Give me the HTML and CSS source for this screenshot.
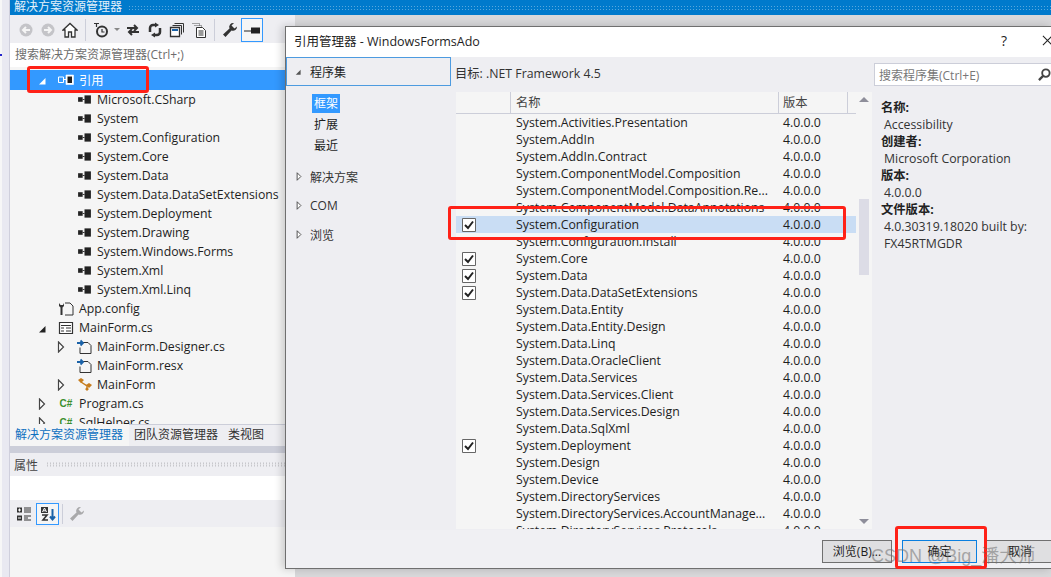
FILE: index.html
```html
<!DOCTYPE html>
<html lang="zh-CN">
<head>
    <meta charset="UTF-8">
    <title>引用管理器</title>
    <link rel="stylesheet" href="styles.css">
</head>
<body>
    <svg class="defs" width="0" height="0">
        <symbol id="ref" viewBox="0 0 16 12">
            <path d="M1 3.500h5v5H1z" fill="currentColor"/>
            <path d="M6 6h2" fill="none" stroke="currentColor"/>
            <path d="M8 1.500h7v9H8z" fill="currentColor"/>
        </symbol>
        <symbol id="ref-sel" viewBox="0 0 16 12">
            <path d="M.5 3h5v5.500h-5zM5.500 5.500h3" fill="none" stroke="currentColor"/>
            <path d="M8 1h7.500v9.500H8z" fill="currentColor" stroke="currentColor" stroke-width=".6"/>
            <path d="M9.500 2.500h4.500v6.500H9.500z" fill="#222"/>
        </symbol>
        <symbol id="tri-open" viewBox="0 0 8 8"><path d="M7.500 1v6.500H1z" fill="currentColor"/></symbol>
        <symbol id="tri-closed" viewBox="0 0 8 12"><path d="M1.500 1l5 5-5 5z" fill="#fff" stroke="#444" stroke-width="1.200"/></symbol>
        <symbol id="file-link" viewBox="0 0 16 16">
            <path d="M6 3.500h5l3 3v8H3v-6" fill="none" stroke="#333"/>
            <path d="M0 4h5M3.500 1.500L6 4 3.500 6.500" fill="none" stroke="#1a62a8" stroke-width="1.800"/>
        </symbol>
        <symbol id="check" viewBox="0 0 14 14">
            <path d="M.5.500h13v13H.5z" fill="#fff" stroke="#666"/>
            <path d="M3 7l3 3 5-6.500" fill="none" stroke="#222" stroke-width="2"/>
        </symbol>
    </svg>

    <div class="edge"><span class="edge-dot"></span></div>

    <!-- 解决方案资源管理器 -->
    <div class="explorer">
        <div class="titlebar"><span>解决方案资源管理器</span><span class="grip"></span></div>
        <div class="toolbar">
            <svg class="tool" viewBox="0 0 16 16"><circle cx="8" cy="8" r="6.500" fill="#c4c4c8"/><path d="M12 8H5M8 5L5 8l3 3" fill="none" stroke="#f5f5f5" stroke-width="2"/></svg>
            <svg class="tool" viewBox="0 0 16 16"><circle cx="8" cy="8" r="6.500" fill="#c4c4c8"/><path d="M4 8h7M8 5l3 3-3 3" fill="none" stroke="#f5f5f5" stroke-width="2"/></svg>
            <svg class="tool" viewBox="0 0 16 16"><path d="M1 8l7-6.500L15 8h-2v7H9.500v-5h-3v5H3V8z" fill="#fff" stroke="#333" stroke-width="1.300"/></svg>
            <span class="sep"></span>
            <svg class="tool" viewBox="0 0 16 16"><circle cx="9" cy="9.500" r="5" fill="none" stroke="#333" stroke-width="2"/><path d="M9 7v3h2.500M1 1.500h5M3.500 1.500V5" fill="none" stroke="#333" stroke-width="1.200"/></svg>
            <span class="caret"></span>
            <svg class="tool" viewBox="0 0 16 16"><path d="M2 6h10M9 3l3 3-3 3" fill="none" stroke="#333" stroke-width="2"/><path d="M14 10H4M7 7l-3 3 3 3" fill="none" stroke="#333" stroke-width="2"/></svg>
            <svg class="tool" viewBox="0 0 16 16"><path d="M3 10V6a3 3 0 013-3h3M13 6v4a3 3 0 01-3 3H7" fill="none" stroke="#333" stroke-width="2.500"/><path d="M8 .500l4 2.500-4 2.500zM8 10.500L4 13l4 2.500z" fill="#333"/></svg>
            <svg class="tool" viewBox="0 0 16 16"><path d="M5.500 1.500h9v9M3.500 3.500h9v9" fill="none" stroke="#333"/><path d="M1.500 5.500h9v9h-9z" fill="#fff" stroke="#333" stroke-width="1.300"/><path d="M3 8h6" stroke="#1a62a8" stroke-width="2"/></svg>
            <svg class="tool" viewBox="0 0 16 16"><path d="M1.500 1.500h7v2M3.500 3.500h7v2" fill="none" stroke="#555" stroke-dasharray="1 1"/><path d="M5.500 5.500h6l3 3v7h-9z" fill="#fff" stroke="#333"/><path d="M7.500 9h5M7.500 11h5M7.500 13h5" stroke="#333"/></svg>
            <span class="sep"></span>
            <svg class="tool" viewBox="0 0 16 16"><path d="M15 4.500a4 4 0 01-5.500 4L3.500 15 1 12.500l6.500-6A4 4 0 0112 1L9.500 3.500l3 3z" fill="#333"/></svg>
            <span class="pin"><svg viewBox="0 0 16 8" width="16" height="8"><path d="M0 5h7" stroke="#222"/><path d="M7 1.500h9v6H7z" fill="#222"/></svg></span>
        </div>
        <div class="search">搜索解决方案资源管理器(Ctrl+;)</div>
        <div class="tree">
            <div class="node sel"><svg class="arrow open"><use href="#tri-open"/></svg><svg class="ticon ref-big"><use href="#ref-sel"/></svg>引用</div>
            <div class="node deep"><svg class="ticon ref"><use href="#ref"/></svg>Microsoft.CSharp</div>
            <div class="node deep"><svg class="ticon ref"><use href="#ref"/></svg>System</div>
            <div class="node deep"><svg class="ticon ref"><use href="#ref"/></svg>System.Configuration</div>
            <div class="node deep"><svg class="ticon ref"><use href="#ref"/></svg>System.Core</div>
            <div class="node deep"><svg class="ticon ref"><use href="#ref"/></svg>System.Data</div>
            <div class="node deep"><svg class="ticon ref"><use href="#ref"/></svg>System.Data.DataSetExtensions</div>
            <div class="node deep"><svg class="ticon ref"><use href="#ref"/></svg>System.Deployment</div>
            <div class="node deep"><svg class="ticon ref"><use href="#ref"/></svg>System.Drawing</div>
            <div class="node deep"><svg class="ticon ref"><use href="#ref"/></svg>System.Windows.Forms</div>
            <div class="node deep"><svg class="ticon ref"><use href="#ref"/></svg>System.Xml</div>
            <div class="node deep"><svg class="ticon ref"><use href="#ref"/></svg>System.Xml.Linq</div>
            <div class="node"><svg class="ticon" viewBox="0 0 16 16"><path d="M7 2h5l3 3v9H7" fill="none" stroke="#333"/><path d="M1 2v3l1.500 1.500V14h2V6.500L6 5V2L5 4H2.500z" fill="#333"/></svg>App.config</div>
            <div class="node"><svg class="arrow open dark"><use href="#tri-open"/></svg><svg class="ticon" viewBox="0 0 16 16"><path d="M1.500 2.500h13v11h-13z" fill="#fff" stroke="#333" stroke-width="1.200"/><path d="M3 5.500h10M3 8h3M8 8h5M3 11h3M8 11h5" stroke="#333"/></svg>MainForm.cs</div>
            <div class="node deep"><svg class="arrow"><use href="#tri-closed"/></svg><svg class="ticon"><use href="#file-link"/></svg>MainForm.Designer.cs</div>
            <div class="node deep"><svg class="ticon"><use href="#file-link"/></svg>MainForm.resx</div>
            <div class="node deep"><svg class="arrow"><use href="#tri-closed"/></svg><svg class="ticon" viewBox="0 0 16 16"><path d="M1 3l3-2 3 2-3 3zM9 8l3-2 3 2-3 3zM8 12l2-1.500 2 1.500-2 2z" fill="#c77d1e"/><path d="M4 5l6 4v3" fill="none" stroke="#c77d1e" stroke-width="1.500"/></svg>MainForm</div>
            <div class="node"><svg class="arrow"><use href="#tri-closed"/></svg><span class="csharp">C#</span>Program.cs</div>
            <div class="node"><svg class="arrow"><use href="#tri-closed"/></svg><span class="csharp">C#</span>SqlHelper.cs</div>
        </div>
        <div class="tabs">
            <span class="tab active">解决方案资源管理器</span>
            <span class="tab">团队资源管理器</span>
            <span class="tab">类视图</span>
        </div>
        <div class="band"></div>
        <div class="props-head"><span>属性</span><span class="grip grey"></span></div>
        <div class="props-combo"></div>
        <div class="props-tools">
            <svg class="ptool" viewBox="0 0 16 16"><path d="M1 1.500h5v5H1zM1 9.500h5v5H1z" fill="#333"/><path d="M2 4h3M3.500 2.500v3M2 12h3" stroke="#fff"/><path d="M8 2h7M8 4h7M8 6h7M8 10h7M8 12h4M8 14h7" stroke="#333"/></svg>
            <span class="ptool-on"><svg class="ptool" viewBox="0 0 16 16"><path d="M1 1h7v6H1z" fill="#333"/><path d="M2.500 6l2-4 2 4M3.200 4.800h2.600" fill="none" stroke="#fff"/><path d="M2 9h5L3 14h5" fill="none" stroke="#333" stroke-width="1.600"/><path d="M12.500 3v10M10 10.500l2.500 3 2.500-3" fill="none" stroke="#1a62a8" stroke-width="2"/></svg></span>
            <span class="sep short"></span>
            <svg class="ptool wrench" viewBox="0 0 16 16"><path d="M15 4.500a4 4 0 01-5.500 4L3.500 15 1 12.500l6.500-6A4 4 0 0112 1L9.500 3.500l3 3z" fill="#a9a9ab"/></svg>
        </div>
        <div class="props-rest"></div>
    </div>

    <!-- 引用管理器 对话框 -->
    <div class="dialog">
        <div class="dlg-title">
            <span>引用管理器 - WindowsFormsAdo</span>
            <span class="help">?</span>
            <svg class="close" viewBox="0 0 12 12"><path d="M1 1l10 10M11 1L1 11" stroke="#222" stroke-width="1.100"/></svg>
        </div>
        <div class="dlg-body">
            <div class="nav">
                <div class="nav-head"><svg class="nav-arrow"><use href="#tri-open"/></svg>程序集</div>
                <div class="nav-sub">
                    <span class="sub on">框架</span>
                    <span class="sub">扩展</span>
                    <span class="sub">最近</span>
                </div>
                <div class="nav-item"><svg class="nav-tri"><use href="#tri-closed"/></svg>解决方案</div>
                <div class="nav-item"><svg class="nav-tri"><use href="#tri-closed"/></svg>COM</div>
                <div class="nav-item"><svg class="nav-tri"><use href="#tri-closed"/></svg>浏览</div>
            </div>
            <div class="center">
                <div class="target">目标: .NET Framework 4.5</div>
                <div class="list">
                    <div class="list-main">
                        <div class="list-head"><span class="col-check"></span><span class="col-name">名称</span><span class="col-ver">版本</span></div>
                        <div class="rows">
                            <div class="row"><span class="col-check"></span><span class="col-name">System.Activities.Presentation</span><span class="col-ver">4.0.0.0</span></div>
                            <div class="row"><span class="col-check"></span><span class="col-name">System.AddIn</span><span class="col-ver">4.0.0.0</span></div>
                            <div class="row"><span class="col-check"></span><span class="col-name">System.AddIn.Contract</span><span class="col-ver">4.0.0.0</span></div>
                            <div class="row"><span class="col-check"></span><span class="col-name">System.ComponentModel.Composition</span><span class="col-ver">4.0.0.0</span></div>
                            <div class="row"><span class="col-check"></span><span class="col-name">System.ComponentModel.Composition.Re...</span><span class="col-ver">4.0.0.0</span></div>
                            <div class="row"><span class="col-check"></span><span class="col-name">System.ComponentModel.DataAnnotations</span><span class="col-ver">4.0.0.0</span></div>
                            <div class="row picked"><span class="col-check"><svg class="check"><use href="#check"/></svg></span><span class="col-name">System.Configuration</span><span class="col-ver">4.0.0.0</span></div>
                            <div class="row"><span class="col-check"></span><span class="col-name">System.Configuration.Install</span><span class="col-ver">4.0.0.0</span></div>
                            <div class="row"><span class="col-check"><svg class="check"><use href="#check"/></svg></span><span class="col-name">System.Core</span><span class="col-ver">4.0.0.0</span></div>
                            <div class="row"><span class="col-check"><svg class="check"><use href="#check"/></svg></span><span class="col-name">System.Data</span><span class="col-ver">4.0.0.0</span></div>
                            <div class="row"><span class="col-check"><svg class="check"><use href="#check"/></svg></span><span class="col-name">System.Data.DataSetExtensions</span><span class="col-ver">4.0.0.0</span></div>
                            <div class="row"><span class="col-check"></span><span class="col-name">System.Data.Entity</span><span class="col-ver">4.0.0.0</span></div>
                            <div class="row"><span class="col-check"></span><span class="col-name">System.Data.Entity.Design</span><span class="col-ver">4.0.0.0</span></div>
                            <div class="row"><span class="col-check"></span><span class="col-name">System.Data.Linq</span><span class="col-ver">4.0.0.0</span></div>
                            <div class="row"><span class="col-check"></span><span class="col-name">System.Data.OracleClient</span><span class="col-ver">4.0.0.0</span></div>
                            <div class="row"><span class="col-check"></span><span class="col-name">System.Data.Services</span><span class="col-ver">4.0.0.0</span></div>
                            <div class="row"><span class="col-check"></span><span class="col-name">System.Data.Services.Client</span><span class="col-ver">4.0.0.0</span></div>
                            <div class="row"><span class="col-check"></span><span class="col-name">System.Data.Services.Design</span><span class="col-ver">4.0.0.0</span></div>
                            <div class="row"><span class="col-check"></span><span class="col-name">System.Data.SqlXml</span><span class="col-ver">4.0.0.0</span></div>
                            <div class="row"><span class="col-check"><svg class="check"><use href="#check"/></svg></span><span class="col-name">System.Deployment</span><span class="col-ver">4.0.0.0</span></div>
                            <div class="row"><span class="col-check"></span><span class="col-name">System.Design</span><span class="col-ver">4.0.0.0</span></div>
                            <div class="row"><span class="col-check"></span><span class="col-name">System.Device</span><span class="col-ver">4.0.0.0</span></div>
                            <div class="row"><span class="col-check"></span><span class="col-name">System.DirectoryServices</span><span class="col-ver">4.0.0.0</span></div>
                            <div class="row"><span class="col-check"></span><span class="col-name">System.DirectoryServices.AccountManage...</span><span class="col-ver">4.0.0.0</span></div>
                            <div class="row"><span class="col-check"></span><span class="col-name">System.DirectoryServices.Protocols</span><span class="col-ver">4.0.0.0</span></div>
                        </div>
                    </div>
                    <div class="scrollbar">
                        <span class="sc-up"></span>
                        <span class="sc-thumb"></span>
                        <span class="sc-down"></span>
                    </div>
                </div>
            </div>
            <div class="info">
                <div class="info-search">
                    <span>搜索程序集(Ctrl+E)</span>
                    <svg class="lens" viewBox="0 0 14 14"><circle cx="8.500" cy="5.500" r="4" fill="none" stroke="#444" stroke-width="2"/><path d="M5.500 8.500L1 13" stroke="#444" stroke-width="2.500"/></svg>
                </div>
                <div class="info-text">
                    <b>名称:</b>
                    <p>Accessibility</p>
                    <b>创建者:</b>
                    <p>Microsoft Corporation</p>
                    <b>版本:</b>
                    <p>4.0.0.0</p>
                    <b>文件版本:</b>
                    <p>4.0.30319.18020 built by:<br>FX45RTMGDR</p>
                </div>
            </div>
        </div>
        <div class="dlg-foot">
            <span class="btn browse">浏览(B)...</span>
            <span class="btn ok">确定</span>
            <span class="btn cancel">取消</span>
        </div>
    </div>

    <!-- 截图上的标注 -->
    <span class="mark mark-ref"></span>
    <span class="mark mark-row"></span>
    <span class="mark mark-ok"></span>
    <span class="watermark">CSDN @Big_潘大师</span>
</body>
</html>
```

FILE: styles.css
```css
* {
    box-sizing: border-box;
}

html,
body {
    margin: 0;
    height: 100%;
}

body {
    width: 1051px;
    height: 577px;
    display: flex;
    position: relative;
    overflow: hidden;
    background: #d8d8da;
    color: #1e1e1e;
    font-family: "Open Sans", "Noto Sans CJK SC", sans-serif;
    font-size: 12.3px;
}

.defs {
    position: absolute;
}

.edge {
    width: 10px;
    flex: none;
    position: relative;
    background: #e9e9f1;
    border-left: 2px solid #f7f7f7;
    border-right: 1px solid #cfcfdc;
}

.edge-dot {
    position: absolute;
    left: -2px;
    top: 54px;
    width: 2px;
    height: 2px;
    background: #2222cc;
}

.explorer {
    flex: 1;
    min-width: 0;
    display: flex;
    flex-direction: column;
}

.explorer > * {
    width: 285px;
}

.explorer > .titlebar {
    width: auto;
}

.titlebar {
    height: 15px;
    flex: none;
    display: flex;
    align-items: flex-end;
    gap: 6px;
    padding: 0 0 2px 4px;
    background: #007acc;
    color: #e4f1fa;
    font-size: 12px;
    line-height: 13px;
    overflow: hidden;
}

.grip {
    flex: 1;
    height: 6px;
    margin-bottom: 2px;
    background: radial-gradient(circle, #59a8dd 0.8px, transparent 1px) 0 0 / 3px 3px;
}

.grip.grey {
    height: 5px;
    background: radial-gradient(circle, #c0c0c4 0.6px, transparent 1px) 0 0 / 3px 2.500px;
    margin: 0;
}

.toolbar {
    height: 28px;
    flex: none;
    display: flex;
    align-items: center;
    gap: 6px;
    padding: 1px 0 0 8px;
    background: #eeeef2;
}

.tool {
    width: 16px;
    height: 16px;
    flex: none;
}

.sep {
    width: 1px;
    height: 22px;
    margin: 0 1px;
    background: #ccced9;
}

.sep.short {
    height: 20px;
    margin: 0;
}

.caret {
    width: 0;
    height: 0;
    margin: 2px -1px 0 -1px;
    border: 3px solid transparent;
    border-top: 3px solid #888;
}

.pin {
    width: 22px;
    height: 24px;
    display: flex;
    align-items: center;
    justify-content: center;
    margin-left: -3px;
    border: 1px solid #3399ff;
    background: #f5f5f5;
}

.search {
    height: 24px;
    flex: none;
    padding-left: 5px;
    background: #fff;
    color: #6d6d6d;
    font-size: 12px;
    line-height: 23px;
    white-space: nowrap;
}

.tree {
    height: 357px;
    flex: none;
    overflow: hidden;
    padding-top: 3px;
    background: #f5f5f5;
    color: #1e1e1e;
}

.node {
    height: 19px;
    display: flex;
    align-items: center;
    padding-left: 48px;
    position: relative;
    white-space: nowrap;
}

.node.deep {
    padding-left: 67px;
}

.node.sel {
    height: 20px;
    background: #3399ff;
    color: #fff;
}

.arrow {
    position: absolute;
    width: 8px;
    height: 12px;
    left: 28px;
    top: 4px;
}

.deep .arrow {
    left: 47px;
}

.arrow.open {
    height: 8px;
    top: 7px;
    color: #fff;
}

.arrow.dark {
    color: #222;
}

.ticon {
    width: 16px;
    height: 16px;
    margin-right: 5px;
    flex: none;
    color: #222;
}

.deep .ticon {
    margin-right: 4px;
}

.deep .ticon.ref {
    width: 15px;
    height: 11px;
    margin-right: 5px;
}

.ticon.ref-big {
    width: 16px;
    height: 12px;
    color: #fff;
}

.csharp {
    width: 16px;
    margin-right: 5px;
    color: #3b8f2e;
    font: bold 10px "Liberation Sans", sans-serif;
    text-align: center;
}

.tabs {
    height: 22px;
    flex: none;
    display: flex;
    gap: 10px;
    background: #eeeef2;
    border-top: 1px solid #ccced9;
    font-size: 12px;
    line-height: 20px;
    color: #333;
}

.tab.active {
    width: 119px;
    margin-top: -1px;
    margin-right: -5px;
    padding-left: 5px;
    background: #f5f5f5;
    color: #0e70c0;
    line-height: 21px;
}

.band {
    height: 7px;
    flex: none;
    background: #ccced9;
}

.props-head {
    height: 23px;
    flex: none;
    display: flex;
    align-items: center;
    gap: 8px;
    padding-left: 4px;
    background: #eeeef2;
    font-size: 12px;
    color: #444;
}

.props-combo {
    height: 24px;
    flex: none;
    background: #fff;
}

.props-tools {
    height: 27px;
    flex: none;
    display: flex;
    align-items: center;
    gap: 3px;
    padding-left: 6px;
    background: #eeeef2;
}

.props-rest {
    flex: 1;
    background: #f5f5f5;
}

.ptool {
    width: 16px;
    height: 16px;
    flex: none;
}

.ptool-on {
    width: 23px;
    height: 22px;
    display: flex;
    align-items: center;
    justify-content: center;
    margin-left: 1px;
    border: 1px solid #3399ff;
    background: #f5f5f5;
}

.ptool.wrench {
    margin-left: 3px;
}

/* 对话框 */

.dialog {
    position: absolute;
    left: 285px;
    top: 26px;
    width: 767px;
    height: 543px;
    display: flex;
    flex-direction: column;
    background: #eeeef2;
    border: 1px solid #6f6f6f;
    border-right: none;
    box-shadow: -3px 0 8px rgba(0, 0, 0, .18);
}

.dlg-title {
    height: 30px;
    flex: none;
    display: flex;
    align-items: center;
    padding: 0 0 3px 8px;
    background: #fff;
    font-size: 12.500px;
}

.help {
    margin-left: auto;
    font-size: 14px;
}

.close {
    width: 11px;
    height: 11px;
    margin-left: 34px;
    position: relative;
    left: 1px;
}

.dlg-body {
    flex: 1;
    min-height: 0;
    display: flex;
}

.nav {
    width: 166px;
    flex: none;
    font-size: 12px;
}

.nav-head {
    height: 29px;
    display: flex;
    align-items: center;
    gap: 9px;
    padding-left: 8px;
    border: 1px solid #4d9be0;
    margin-right: 1px;
}

.nav-arrow {
    width: 6px;
    height: 6px;
    color: #555;
}

.nav-sub {
    display: flex;
    flex-direction: column;
    align-items: flex-start;
    gap: 2px;
    padding: 8px 0 7px 26px;
}

.sub {
    height: 19px;
    padding: 0 2px;
    line-height: 19px;
}

.sub.on {
    background: #3399ff;
    color: #fff;
}

.nav-item {
    height: 29px;
    display: flex;
    align-items: center;
    gap: 8px;
    padding-left: 10px;
    color: #333;
}

.nav-tri {
    width: 6px;
    height: 9px;
}

.center {
    width: 420px;
    flex: none;
    display: flex;
    flex-direction: column;
}

.target {
    height: 35px;
    padding: 9px 0 0 3px;
    line-height: 16px;
    color: #333;
}

.list {
    height: 437px;
    flex: none;
    margin-left: 4px;
    display: flex;
    overflow: hidden;
    background: #f5f5f5;
}

.list-main {
    flex: 1;
    min-width: 0;
    overflow: hidden;
}

.list-head {
    height: 22px;
    display: flex;
    align-items: center;
    border-bottom: 1px solid #ccced9;
}

.list-head span {
    height: 21px;
    line-height: 21px;
    border-right: 1px solid #ccced9;
    color: #444;
}

.row {
    height: 17px;
    display: flex;
    align-items: center;
    line-height: 17px;
    white-space: nowrap;
}

.row.picked {
    background: #c9ddf4;
}

.col-check {
    width: 55px;
    flex: none;
    display: flex;
    align-items: center;
    padding-left: 6px;
}

.col-name {
    width: 268px;
    flex: none;
    padding-left: 5px;
    overflow: hidden;
}

.col-ver {
    width: 77px;
    flex: none;
    padding-left: 4px;
}

.list-head .col-ver {
    width: 69px;
}

.check {
    width: 14px;
    height: 14px;
}

.scrollbar {
    width: 16px;
    flex: none;
    display: flex;
    flex-direction: column;
    align-items: center;
}

.sc-up,
.sc-down {
    width: 0;
    height: 0;
    flex: none;
    border: 5px solid transparent;
}

.sc-up {
    border-bottom-color: #8e8e9a;
}

.sc-thumb {
    width: 10px;
    height: 76px;
    margin-top: 97px;
    background: #dcdce6;
}

.sc-down {
    margin-top: auto;
    border-top-color: #8e8e9a;
}

.info {
    flex: 1;
    min-width: 0;
    color: #333;
}

.info-search {
    height: 23px;
    margin: 6px 0 0 2px;
    display: flex;
    align-items: center;
    justify-content: space-between;
    padding: 0 1px 0 4px;
    background: #fff;
    border: 1px solid #ccced9;
    border-right: none;
    color: #777;
    font-size: 12px;
    white-space: nowrap;
}

.lens {
    width: 13px;
    height: 13px;
    flex: none;
}

.info-text {
    padding: 13px 0 0 9px;
    line-height: 17px;
}

.info-text b {
    display: block;
    color: #222;
    font-weight: bold;
}

.info-text p {
    margin: 0;
    padding-left: 3px;
}

.dlg-foot {
    height: 38px;
    flex: none;
    display: flex;
    gap: 10px;
    padding: 10px 0 0 536px;
    background: #f0f0f3;
}

.btn {
    width: 70px;
    height: 23px;
    flex: none;
    border: 1px solid #707070;
    background: #dfdfe1;
    text-align: center;
    font-size: 12px;
    line-height: 21px;
}

.btn.ok {
    width: 75px;
    border: 1px solid #0a7fe0;
    background: #e4e4e6;
}

.btn.cancel {
    margin-left: -2px;
}

/* 标注 */

.mark {
    position: absolute;
    border: 3px solid #ff2117;
    border-radius: 3px;
}

.mark-ref {
    left: 27px;
    top: 66px;
    width: 122px;
    height: 27px;
}

.mark-row {
    left: 448px;
    top: 206px;
    width: 398px;
    height: 34px;
}

.mark-ok {
    left: 895px;
    top: 526px;
    width: 92px;
    height: 43px;
}

.watermark {
    position: absolute;
    left: 871px;
    top: 545px;
    color: rgba(110, 110, 110, .55);
    font-family: "Liberation Sans", "Noto Sans CJK SC", sans-serif;
    font-size: 18px;
    line-height: 22px;
    white-space: nowrap;
}
```
